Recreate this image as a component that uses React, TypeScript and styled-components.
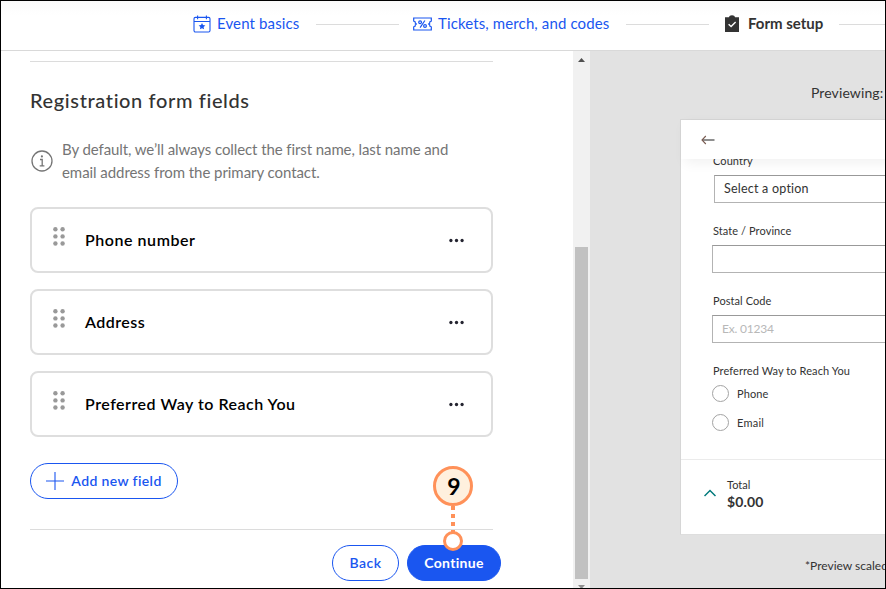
import React from "react";
import styled, { createGlobalStyle } from "styled-components";

const GlobalStyle = createGlobalStyle`
  *, *::before, *::after { box-sizing: border-box; }
  body { margin: 0; overflow: hidden; }
  button { font: inherit; padding: 0; margin: 0; cursor: pointer; }
  svg { display: block; flex: none; }
`;

const blue = "#1a56f0";
const orange = "#ff9159";

const Frame = styled.div`
  position: relative;
  width: 886px;
  height: 589px;
  display: flex;
  flex-direction: column;
  overflow: hidden;
  border: 1px solid #000;
  background: #fff;
  font-family: Lato, "Liberation Sans", sans-serif;
  color: #333;
`;

const Label = styled.span<{ $size: number; $weight?: number; $track?: number; $line?: number; $color?: string }>`
  display: block;
  white-space: nowrap;
  font-size: ${(p) => p.$size}px;
  font-weight: ${(p) => p.$weight ?? 400};
  letter-spacing: ${(p) => p.$track ?? 0}px;
  line-height: ${(p) => p.$line ?? 20}px;
  color: ${(p) => p.$color ?? "inherit"};
`;

const Stepper = styled.header`
  flex: none;
  height: 50px;
  display: flex;
  align-items: center;
  padding: 0 0 3px 192px;
  border-bottom: 1px solid #d9d9d9;
  background: linear-gradient(#fafafa, #fff 14px);
`;

const Step = styled.a<{ $width: number; $gap: number; $active?: boolean }>`
  flex: none;
  width: ${(p) => p.$width}px;
  display: flex;
  align-items: center;
  gap: ${(p) => p.$gap}px;
  color: ${(p) => (p.$active ? "#333" : blue)};
  & > span {
    padding-bottom: 1px;
    line-height: 19px;
  }
`;

const StepLine = styled.i<{ $width: number; $left: number; $right: number }>`
  flex: none;
  width: ${(p) => p.$width}px;
  height: 1px;
  margin: 0 ${(p) => p.$right}px 0 ${(p) => p.$left}px;
  background: #dcdcdc;
`;

const Body = styled.main`
  flex: 1;
  min-height: 0;
  display: flex;
`;

const Editor = styled.section`
  flex: none;
  width: 572px;
  padding: 10px 0 0 29px;
`;

const Divider = styled.hr`
  width: 463px;
  height: 1px;
  margin: 0;
  border: 0;
  background: #dcdcdc;
`;

const Heading = styled.h2`
  margin: 23px 0 0;
  font-size: 20px;
  line-height: 30px;
  font-weight: 500;
  letter-spacing: 0.62px;
`;

const Note = styled.div`
  display: flex;
  align-items: center;
  gap: 9px;
  height: 46px;
  margin: 23px 0 23px;
  padding-left: 1px;
  color: #757575;
`;

const Cards = styled.div`
  display: flex;
  flex-direction: column;
  gap: 16px;
`;

const Card = styled.article`
  width: 463px;
  height: 66px;
  display: flex;
  align-items: center;
  padding: 0 27px 0 21px;
  border: 2px solid #dedede;
  border-radius: 8px;
`;

const Grip = styled.svg`
  margin: -7px 20px 0 0;
`;

const More = styled.svg`
  margin-left: auto;
`;

const Button = styled.button<{ $width: number; $primary?: boolean }>`
  width: ${(p) => p.$width}px;
  height: 36px;
  display: flex;
  align-items: center;
  justify-content: center;
  gap: 7px;
  border: 1px solid ${blue};
  border-radius: 18px;
  background: ${(p) => (p.$primary ? blue : "#fff")};
  color: ${(p) => (p.$primary ? "#fff" : blue)};
`;

const AddRow = styled.div`
  margin: 26px 0 30px;
`;

const Actions = styled.div`
  display: flex;
  gap: 8px;
  margin: 15px 0 0 302px;
`;

const Scrollbar = styled.div`
  flex: none;
  width: 17px;
  display: flex;
  flex-direction: column;
  align-items: center;
  justify-content: space-between;
  background: #f1f1f1;
`;

const Thumb = styled.div`
  width: 13px;
  height: 332px;
  margin-top: 179px;
  background: #c1c1c1;
`;

const Preview = styled.aside`
  flex: 1;
  min-width: 0;
  overflow: hidden;
  padding: 32px 0 0 90px;
  background: #e2e2e2;
`;

const PreviewTitle = styled.div`
  margin-left: 131px;
`;

const Phone = styled.div`
  width: 320px;
  height: 416px;
  margin-top: 16px;
  display: flex;
  flex-direction: column;
  border: 1px solid #d6d6d6;
  border-bottom-color: #dedede;
  background: #fff;
`;

const PhoneBar = styled.div`
  position: relative;
  flex: none;
  height: 39px;
  display: flex;
  align-items: center;
  padding-left: 20px;
  background: #fff;
  box-shadow: 4px 4px 12px rgba(0, 0, 0, 0.06);
`;

const PhoneForm = styled.form`
  flex: 1;
  min-height: 0;
  padding-left: 31px;
  margin-top: -6px;
`;

const FieldLabel = styled.div`
  padding-left: 1px;
  font-size: 11px;
  line-height: 16px;
  letter-spacing: 0.08px;
  white-space: nowrap;
`;

const Field = styled.div<{ $inset?: number }>`
  height: 70px;
  & > :last-child {
    margin: 6px 0 0 ${(p) => p.$inset ?? 0}px;
  }
`;

const Control = styled.div`
  width: 300px;
  height: 28px;
  display: flex;
  align-items: center;
  padding-left: 9px;
  border: 1px solid #b3b3b3;
  border-top-color: #999;
  background: #fff;
`;

const RadioRow = styled.label`
  height: 29px;
  display: flex;
  align-items: center;
  gap: 8px;
  & > :last-child {
    padding-bottom: 1px;
    line-height: 19px;
  }
`;

const RadioDot = styled.span`
  width: 17px;
  height: 17px;
  border: 1px solid #a3a3a3;
  border-radius: 50%;
`;

const Summary = styled.footer`
  flex: none;
  height: 75px;
  display: flex;
  align-items: center;
  gap: 11px;
  padding: 0 0 6px 23px;
  border-top: 1px solid #ebebeb;
  & > svg {
    margin-top: -2px;
  }
`;

const Footnote = styled.div`
  margin: 21px 0 0 125px;
`;

const Callout = styled.div`
  position: absolute;
  left: 432px;
  top: 465px;
  width: 40px;
  display: flex;
  flex-direction: column;
  align-items: center;
`;

const CalloutNumber = styled.div`
  width: 40px;
  height: 40px;
  display: flex;
  align-items: center;
  justify-content: center;
  padding-left: 2px;
  border: 3px solid ${orange};
  border-radius: 50%;
  background: #fff0de;
  color: #000;
`;

const CalloutTarget = styled.div`
  width: 20px;
  height: 20px;
  margin-top: -1px;
  border: 3px solid ${orange};
  border-radius: 50%;
  background: #fff;
`;

const CalendarIcon = () => (
  <svg width="18" height="18" viewBox="0 0 18 18" fill="none" stroke={blue} strokeWidth="1.1">
    <rect x="1" y="2.4" width="16" height="14.6" rx="1.4" />
    <path d="M1 6.5H17M4.6 0.5V4.3M13.4 0.5V4.3" />
    <path d="M9 8l1 2.1 2.4.3-1.8 1.6.5 2.3L9 13.2l-2.1 1.1.5-2.3-1.8-1.6 2.4-.3z" fill={blue} stroke="none" />
  </svg>
);

const TicketIcon = () => (
  <svg width="19" height="14" viewBox="0 0 19 14" fill="none" stroke={blue} strokeWidth="1.2">
    <path d="M.7 1H18.3V4.2L16.8 4.8V6L15.7 7L16.8 8V9.2L18.3 9.8V13H.7V9.8L2.2 9.2V8L3.3 7L2.2 6V4.8L.7 4.2Z" />
    <path d="M11.9 3.5L7.1 10.6" />
    <circle cx="7.1" cy="5.2" r="1.4" />
    <circle cx="12" cy="9" r="1.4" />
  </svg>
);

const ClipboardIcon = () => (
  <svg width="16" height="18" viewBox="0 0 16 18">
    <path d="M1 2.3H4.9C5.3 1.2 6.2 .3 8 .3S10.7 1.2 11.1 2.3H15V17H1Z" fill="#333" />
    <path d="M4.6 9.2L7.1 11.5L11.6 7" fill="none" stroke="#fff" strokeWidth="1.4" />
  </svg>
);

const InfoIcon = () => (
  <svg width="22" height="22" viewBox="0 0 22 22" fill="none" stroke="#757575" strokeWidth="1.3">
    <circle cx="11" cy="11" r="10" />
    <path d="M9 9.5H11.2V15.8M8.7 15.9H13.4" />
    <circle cx="10.9" cy="6.4" r="1.1" fill="#757575" stroke="none" />
  </svg>
);

const GripIcon = () => (
  <Grip width="12" height="19" viewBox="0 0 12 19" fill="#999">
    {[2.3, 9.4, 16.5].map((y) => (
      <React.Fragment key={y}>
        <circle cx="2.4" cy={y} r="2.2" />
        <circle cx="9.6" cy={y} r="2.2" />
      </React.Fragment>
    ))}
  </Grip>
);

const MoreIcon = () => (
  <More width="15" height="5" viewBox="0 0 15 5" fill="#242430">
    <circle cx="1.9" cy="2.5" r="1.65" />
    <circle cx="7.5" cy="2.5" r="1.65" />
    <circle cx="13.1" cy="2.5" r="1.65" />
  </More>
);

const fields = [
  { name: "Phone number", track: 0.55 },
  { name: "Address", track: 0.45 },
  { name: "Preferred Way to Reach You", track: 0.5 },
];

export default function App() {
  return (
    <>
      <GlobalStyle />
      <Frame>
        <Stepper>
          <Step $width={107} $gap={6}>
            <CalendarIcon />
            <Label $size={15} $track={0.13}>Event basics</Label>
          </Step>
          <StepLine $width={83} $left={16} $right={14} />
          <Step $width={197} $gap={6}>
            <TicketIcon />
            <Label $size={15} $track={0.12}>Tickets, merch, and codes</Label>
          </Step>
          <StepLine $width={83} $left={16} $right={15} />
          <Step $width={100} $gap={8} $active>
            <ClipboardIcon />
            <Label $size={15} $weight={700}>Form setup</Label>
          </Step>
          <StepLine $width={83} $left={15} $right={0} />
        </Stepper>
        <Body>
          <Editor>
            <Divider />
            <Heading>Registration form fields</Heading>
            <Note>
              <InfoIcon />
              <div>
                <Label $size={15} $line={23} $track={-0.09}>By default, we’ll always collect the first name, last name and</Label>
                <Label $size={15} $line={23} $track={-0.06}>email address from the primary contact.</Label>
              </div>
            </Note>
            <Cards>
              {fields.map((f) => (
                <Card key={f.name}>
                  <GripIcon />
                  <Label $size={16} $weight={600} $track={f.track} $color="#000">{f.name}</Label>
                  <MoreIcon />
                </Card>
              ))}
            </Cards>
            <AddRow>
              <Button $width={148}>
                <svg width="18" height="18" viewBox="0 0 18 18" stroke={blue} strokeWidth="1.1">
                  <path d="M9 0V18M0 9H18" />
                </svg>
                <Label $size={14} $weight={600} $track={0.38}>Add new field</Label>
              </Button>
            </AddRow>
            <Divider />
            <Actions>
              <Button $width={67}><Label $size={14} $weight={600} $track={0.5}>Back</Label></Button>
              <Button $width={94} $primary><Label $size={14} $weight={700} $track={0.3}>Continue</Label></Button>
            </Actions>
          </Editor>
          <Scrollbar>
            <svg width="17" height="17" viewBox="0 0 17 17"><path d="M5 11L8.5 7L12 11Z" fill="#505050" /></svg>
            <Thumb />
            <svg width="17" height="9" viewBox="0 0 17 9"><path d="M5 6H12L8.5 10Z" fill="#909090" /></svg>
          </Scrollbar>
          <Preview>
            <PreviewTitle><Label $size={14} $track={0.1}>Previewing:</Label></PreviewTitle>
            <Phone>
              <PhoneBar>
                <svg width="14" height="10" viewBox="0 0 14 10" fill="none" strokeWidth="1.1">
                  <path d="M1 5H13.5" stroke="#333" />
                  <path d="M4.8 1L1 5L4.8 9" stroke="#795b50" />
                </svg>
              </PhoneBar>
              <PhoneForm>
                <Field $inset={2}>
                  <FieldLabel>Country</FieldLabel>
                  <Control><Label $size={12.5} $track={0.22}>Select a option</Label></Control>
                </Field>
                <Field>
                  <FieldLabel>State / Province</FieldLabel>
                  <Control />
                </Field>
                <Field>
                  <FieldLabel>Postal Code</FieldLabel>
                  <Control><Label $size={12} $track={-0.2} $color="#b8b8b8">Ex. 01234</Label></Control>
                </Field>
                <FieldLabel>Preferred Way to Reach You</FieldLabel>
                <RadioRow><RadioDot /><Label $size={11} $track={0.1}>Phone</Label></RadioRow>
                <RadioRow><RadioDot /><Label $size={11} $track={0.25}>Email</Label></RadioRow>
              </PhoneForm>
              <Summary>
                <svg width="12" height="8" viewBox="0 0 12 8" fill="none" stroke="#00797c" strokeWidth="1.5">
                  <path d="M.5 7L6 1.5L11.5 7" />
                </svg>
                <div>
                  <Label $size={11} $line={16}>Total</Label>
                  <Label $size={14} $weight={700} $line={18} $track={0.15}>$0.00</Label>
                </div>
              </Summary>
            </Phone>
            <Footnote><Label $size={12}>*Preview scaled</Label></Footnote>
          </Preview>
        </Body>
        <Callout>
          <CalloutNumber><Label $size={23} $weight={700} $line={28}>9</Label></CalloutNumber>
          <svg width="4" height="26" viewBox="0 0 4 26" fill={orange}>
            <path d="M0 0H4V4H0ZM0 8H4V12H0ZM0 16H4V20H0ZM0 24H4V26H0Z" />
          </svg>
          <CalloutTarget />
        </Callout>
      </Frame>
    </>
  );
}
